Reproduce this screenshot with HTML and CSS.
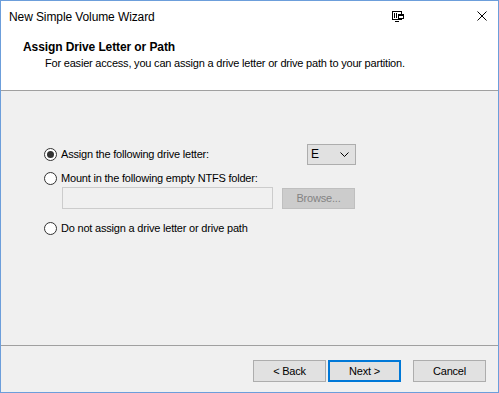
FILE: index.html
```html
<!DOCTYPE html>
<html lang="en">
<head>
    <meta charset="UTF-8">
    <title>New Simple Volume Wizard</title>
    <link rel="stylesheet" href="styles.css">
</head>
<body>
    <div class="window">
        <!-- Title bar -->
        <div class="titlebar">
            <span class="title">New Simple Volume Wizard</span>
            <svg class="tb-icon" width="12" height="12" viewBox="0 0 12 12">
                <rect x="0.5" y="0.5" width="9" height="8" fill="#fff" stroke="#000"/>
                <line x1="2.5" y1="2" x2="2.5" y2="7" stroke="#000"/>
                <line x1="4.5" y1="2" x2="4.5" y2="7" stroke="#000"/>
                <rect x="6" y="3" width="6" height="5" fill="#000"/>
                <rect x="7" y="5" width="4" height="2" fill="#fff"/>
                <line x1="3" y1="10.5" x2="7" y2="10.5" stroke="#000"/>
            </svg>
            <svg class="tb-close" width="10" height="10" viewBox="0 0 10 10">
                <path d="M0.5 0.5 L9.5 9.5 M9.5 0.5 L0.5 9.5" stroke="#000" stroke-width="1" fill="none"/>
            </svg>
        </div>

        <!-- Header -->
        <div class="header">
            <div class="header-title">Assign Drive Letter or Path</div>
            <div class="header-sub">For easier access, you can assign a drive letter or drive path to your partition.</div>
        </div>

        <!-- Options -->
        <div class="content">
            <div class="options">
                <div class="row row-first">
                    <span class="radio checked"></span>
                    <span class="label">Assign the following drive letter:</span>
                    <div class="combo">
                        <span>E</span>
                        <svg width="9" height="5" viewBox="0 0 9 5">
                            <path d="M0.5 0.5 L4.5 4.5 L8.5 0.5" stroke="#000" fill="none"/>
                        </svg>
                    </div>
                </div>
                <div class="row row-second">
                    <span class="radio"></span>
                    <span class="label">Mount in the following empty NTFS folder:</span>
                </div>
                <div class="folder-row">
                    <div class="textbox"></div>
                    <div class="btn btn-disabled">Browse...</div>
                </div>
                <div class="row row-third">
                    <span class="radio"></span>
                    <span class="label">Do not assign a drive letter or drive path</span>
                </div>
            </div>
        </div>

        <!-- Footer buttons -->
        <div class="footer">
            <div class="btn">&lt; Back</div>
            <div class="btn btn-default">Next &gt;</div>
            <div class="btn btn-cancel">Cancel</div>
        </div>
    </div>
</body>
</html>
```

FILE: styles.css
```css
* {
    margin: 0;
    padding: 0;
    box-sizing: border-box;
}

body {
    font-family: 'Liberation Sans', Arial, sans-serif;
    font-size: 11px;
    letter-spacing: -0.2px;
    color: #000;
    background: #fff;
}

.window {
    width: 499px;
    height: 393px;
    border: 1px solid #6c9edb;
    background: #f0f0f0;
    display: flex;
    flex-direction: column;
}

/* Title bar */
.titlebar {
    height: 30px;
    background: #fff;
    display: flex;
    align-items: center;
    padding-left: 8px;
    padding-top: 2px;
    font-size: 12px;
    letter-spacing: -0.1px;
}

.title {
    flex: 1;
}

.tb-icon {
    margin-right: 73px;
    margin-top: -1px;
}

.tb-close {
    margin-right: 11px;
    margin-top: -2px;
}

/* Header */
.header {
    height: 60px;
    background: #fff;
    border-bottom: 1px solid #a0a0a0;
    padding: 8px 0 0 22px;
    line-height: 16px;
}

.header-title {
    font-weight: bold;
    font-size: 12px;
    letter-spacing: -0.1px;
}

.header-sub {
    padding-left: 22px;
}

/* Content */
.content {
    flex: 1;
    padding: 52px 0 0 43px;
}

.options {
    width: 312px;
}

.row {
    display: flex;
    align-items: center;
}

.row-first {
    height: 22px;
}

.row-second {
    height: 16px;
    margin-top: 5px;
}

.row-third {
    height: 16px;
    margin-top: 11px;
}

.radio {
    width: 13px;
    height: 13px;
    border: 1px solid #333;
    border-radius: 50%;
    background: #fff;
    display: flex;
    justify-content: center;
    align-items: center;
    margin-right: 4px;
    flex-shrink: 0;
}

.radio.checked::after {
    content: '';
    width: 7px;
    height: 7px;
    border-radius: 50%;
    background: #333;
}

.label {
    flex: 1;
}

.combo {
    width: 49px;
    height: 21px;
    background: #e1e1e1;
    border: 1px solid #adadad;
    display: flex;
    align-items: center;
    justify-content: space-between;
    padding: 0 6px 0 3px;
    font-size: 12px;
}

.folder-row {
    display: flex;
    align-items: center;
    margin-top: 1px;
    padding-left: 18px;
}

.textbox {
    width: 211px;
    height: 22px;
    border: 1px solid #cccccc;
    background: #f0f0f0;
    margin-right: 9px;
}

/* Buttons */
.btn {
    width: 73px;
    height: 22px;
    background: #e1e1e1;
    border: 1px solid #adadad;
    display: flex;
    align-items: center;
    justify-content: center;
}

.btn-disabled {
    height: 21px;
    background: #cccccc;
    border-color: #bfbfbf;
    color: #838383;
}

.btn-default {
    border: 2px solid #0078d7;
}

.footer {
    height: 47px;
    border-top: 1px solid #a0a0a0;
    display: flex;
    justify-content: flex-end;
    gap: 2px;
    padding: 14px 12px 0 0;
}

.btn-cancel {
    margin-left: 10px;
}
```
